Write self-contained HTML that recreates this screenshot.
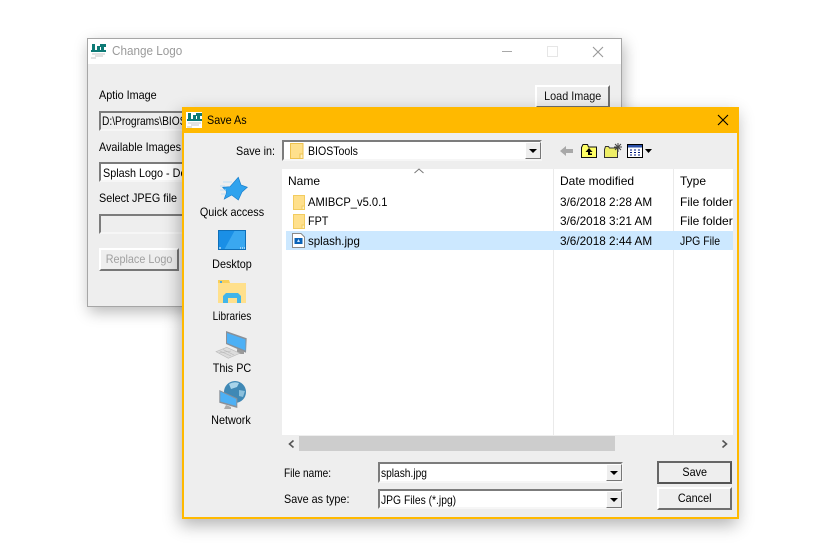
<!DOCTYPE html>
<html><head><meta charset="utf-8">
<style>
html,body{margin:0;padding:0;background:#fff;width:815px;height:553px;overflow:hidden}
body{position:relative;font-family:"Liberation Sans",sans-serif;font-size:12px;color:#000}
.a{position:absolute}
.t{position:absolute;white-space:nowrap;line-height:14px;transform-origin:0 0}
.x9{transform:scaleX(.9)}
.x85{transform:scaleX(.85)}
.sunk{position:absolute;box-sizing:border-box;border:2px solid;border-color:#7c7c7c #f6f6f6 #f6f6f6 #7c7c7c;background:#fff}
.btn{position:absolute;box-sizing:border-box;background:#eee;border:2px solid;border-color:#fff #6f6f6f #6f6f6f #fff;text-align:center;line-height:18px}
.btn span{display:inline-block;transform:scaleX(.9)}
.dd{position:absolute;box-sizing:border-box;width:16px;height:17px;background:#eee;border:1px solid;border-color:#fff #777 #777 #fff}
.dd:after{content:"";position:absolute;left:3px;top:6px;border:4px solid transparent;border-top:4px solid #000;border-bottom:0}
.c{text-align:center;width:80px;left:192px;transform-origin:50% 0}
svg{position:absolute;overflow:visible}
</style></head><body>

<!-- Back window -->
<div class="a" style="left:87px;top:38px;width:535px;height:269px;box-sizing:border-box;border:1px solid #a6a6a6;background:#eee;box-shadow:2px 5px 14px rgba(0,0,0,.28)"></div>
<div class="a" style="left:88px;top:39px;width:533px;height:25px;background:#fff"></div>
<svg style="left:91px;top:43px" width="16" height="16"><path d="M0 7h15v2H0zM1 1h3v6H1zM6 3h3v4H6zM9 1h6v3h-2v3h-3V4H9z" fill="#0e7a76"/><path d="M1 11h13M4 13h8M0 15h5" stroke="#c4c4c4"/></svg>
<div class="t x9" style="left:112px;top:44px;color:#9a9a9a;font-size:13px">Change Logo</div>
<div class="a" style="left:502px;top:51px;width:10px;height:1px;background:#a8a8a8"></div>
<div class="a" style="left:547px;top:46px;width:9px;height:9px;border:1px solid #e6e6e6"></div>
<svg style="left:592px;top:46px" width="12" height="12"><path d="M1 1L11 11M11 1L1 11" stroke="#999" stroke-width="1.1"/></svg>
<div class="t x9" style="left:99px;top:88px">Aptio Image</div>
<div class="btn" style="left:535px;top:85px;width:75px;height:23px;color:#111"><span>Load Image</span></div>
<div class="sunk" style="left:99px;top:111px;width:100px;height:20px;background:#eee"></div>
<div class="t x85" style="left:102px;top:114px">D:\Programs\BIOS</div>
<div class="t x9" style="left:99px;top:140px">Available Images</div>
<div class="sunk" style="left:99px;top:162px;width:100px;height:20px"></div>
<div class="t x9" style="left:103px;top:166px">Splash Logo - De</div>
<div class="t x9" style="left:99px;top:191px">Select JPEG file</div>
<div class="sunk" style="left:99px;top:214px;width:100px;height:20px;background:#eee"></div>
<div class="btn" style="left:99px;top:248px;width:80px;height:23px;color:#a0a0a0;border-color:#fff #777 #777 #fff;line-height:18px"><span>Replace Logo</span></div>

<!-- Front window -->
<div class="a" style="left:182px;top:107px;width:557px;height:412px;box-sizing:border-box;border:2px solid #ffb900;background:#eee;box-shadow:-2px 6px 16px rgba(0,0,0,.3)"></div>
<div class="a" style="left:182px;top:107px;width:557px;height:26px;background:#ffb900"></div>
<div class="a" style="left:186px;top:112px;width:16px;height:16px;background:#fff"></div>
<svg style="left:187px;top:112px" width="16" height="16"><path d="M0 7h15v2H0zM1 1h3v6H1zM6 3h3v4H6zM9 1h6v3h-2v3h-3V4H9z" fill="#0e7a76"/><path d="M1 11h13M4 13h8M0 15h5" stroke="#c4c4c4"/></svg>
<div class="t x9" style="left:207px;top:113px">Save As</div>
<svg style="left:717px;top:114px" width="12" height="12"><path d="M1 1L11 11M11 1L1 11" stroke="#000" stroke-width="1.1"/></svg>

<div class="t x9" style="left:236px;top:144px">Save in:</div>
<div class="sunk" style="left:282px;top:140px;width:260px;height:21px"></div>
<svg style="left:290px;top:143px" width="14" height="16"><path d="M.5.5h12.5v15H.5z" fill="#ffe08c" stroke="#eec24f"/><path d="M10 11h3v4.500h-3z" fill="#fff0c0" stroke="#eec24f"/></svg>
<div class="t" style="left:308px;top:144px;transform:scaleX(.88)">BIOSTools</div>
<div class="dd" style="left:525px;top:142px"></div>

<svg style="left:559px;top:144px" width="14" height="14"><path d="M1 7L7 2V5H14V9H7V12Z" fill="#a8a8a8"/></svg>
<svg style="left:581px;top:144px" width="16" height="14"><path d="M.5 3.500V13.500H15.500V3H7.500L6.500 .5H2Z" fill="#ffff66" stroke="#111"/><path d="M8 4L4.500 8H7V11H11V9.500H9V8H11.500Z" fill="#000"/></svg>
<svg style="left:604px;top:143px" width="18" height="15"><path d="M.5 6.500V14.500H13.500V5H5.500L4.500 3.500H1.500Z" fill="#eeee66" stroke="#333"/><path d="M14 0V9M10 4H18M11 1L17 7M17 1L11 7" stroke="#444"/></svg>
<svg style="left:627px;top:144px" width="26" height="14"><rect x=".5" y=".5" width="15" height="13" fill="#fff" stroke="#000"/><rect x="1" y="1" width="14" height="2.500" fill="#2a4fa8"/><path d="M3 6h2M7 6h2M11 6h2M3 8.500h2M7 8.500h2M11 8.500h2M3 11h2M7 11h2M11 11h2" stroke="#001a80"/><path d="M18 5h7l-3.500 4z" fill="#000"/></svg>

<!-- Places -->
<svg style="left:220px;top:176px" width="28" height="26"><path d="M18.300 1.300L21 9L27.300 11.300L22 16L18.300 24L11.700 19L4.300 23L6.700 15.700L2.700 11.300L10 10.700Z" fill="#2fa3ee" stroke="#1a7fcc" stroke-width=".7"/><path d="M3 6h9M0 10h5M0 14h6M1 18h5" stroke="#bcdff7"/></svg>
<div class="t c x9" style="top:205px">Quick access</div>
<svg style="left:218px;top:230px" width="28" height="20"><rect width="28" height="20" fill="#1a8fe6"/><path d="M17 0H28V20H6Z" fill="#3aa8f0"/><path d="M.5.500H27.500V19.500H.5Z" fill="none" stroke="#0f6fb8"/><path d="M1 18h2M22 18h1M24 18h1M26 18h1" stroke="#fff"/></svg>
<div class="t c x9" style="top:257px">Desktop</div>
<svg style="left:218px;top:280px" width="28" height="24"><path d="M0 3h28v20H0Z" fill="#ffe08c"/><path d="M0 0h11l1 3H0Z" fill="#f8cf5a"/><path d="M2 1h2v2H2z" fill="#4aa8e0"/><path d="M5 23V16L8 13H20L23 16V23H19V18H10V23Z" fill="#41b5ea"/></svg>
<div class="t c" style="top:309px;transform:scaleX(.84)">Libraries</div>
<svg style="left:216px;top:331px" width="32" height="30"><path d="M10 0L30.700 7.300L30 21.700L10 13Z" fill="#8a9098"/><path d="M11 2L29.500 8.500V19.500L11 12Z" fill="#4db0f5"/><path d="M21 18V23H28V20Z" fill="#9a9a9a"/><path d="M0 20.700L10.700 16.300L24 22.300L12.300 27.300Z" fill="#dcdcdc" stroke="#bbb" stroke-width=".6"/><path d="M4 20L15 25M7 18.500L18 24M3 22L15 20" stroke="#b8b8b8" stroke-width=".6"/></svg>
<div class="t c x9" style="top:361px">This PC</div>
<svg style="left:218px;top:382px" width="29" height="28"><circle cx="17" cy="10" r="11" fill="#3f88b5"/><path d="M11 2Q16 -1 21 1L19 5L13 7Z" fill="#a8d4ea"/><path d="M21 8l6 1-2 6-4-1Z" fill="#8cc0dc"/><path d="M1.300 8L19.300 16.300V26L1.300 20.700Z" fill="#8a9098"/><path d="M2.300 9.500L18.300 17V24L2.300 19.500Z" fill="#4db0f5"/><path d="M8 23L13 25V27H6Z" fill="#aaa"/></svg>
<div class="t c x9" style="top:413px;left:191px">Network</div>

<!-- List -->
<div class="a" style="left:282px;top:169px;width:451px;height:266px;background:#fff"></div>
<div class="a" style="left:553px;top:169px;width:1px;height:266px;background:#eaeaea"></div>
<div class="a" style="left:673px;top:169px;width:1px;height:266px;background:#eaeaea"></div>
<svg style="left:414px;top:168px" width="10" height="6"><path d="M.5 5L5 1L9.500 5" fill="none" stroke="#777"/></svg>
<div class="t" style="left:288px;top:174px">Name</div>
<div class="t" style="left:560px;top:174px">Date modified</div>
<div class="t" style="left:680px;top:174px">Type</div>

<svg style="left:293px;top:195px" width="12" height="15"><path d="M.5.500H11.500V14.500H.5Z" fill="#ffe08c" stroke="#f2cc60"/><path d="M9 11h2.500v3.500H9z" fill="#fff0c0" stroke="#f2cc60"/></svg>
<div class="t" style="left:308px;top:195px;transform:scaleX(.93)">AMIBCP_v5.0.1</div>
<div class="t" style="left:560px;top:195px;transform:scaleX(.98)">3/6/2018 2:28 AM</div>
<div class="t" style="left:680px;top:195px">File folder</div>
<svg style="left:293px;top:214px" width="12" height="15"><path d="M.5.500H11.500V14.500H.5Z" fill="#ffe08c" stroke="#f2cc60"/><path d="M9 11h2.500v3.500H9z" fill="#fff0c0" stroke="#f2cc60"/></svg>
<div class="t x9" style="left:308px;top:214px">FPT</div>
<div class="t" style="left:560px;top:214px;transform:scaleX(.98)">3/6/2018 3:21 AM</div>
<div class="t" style="left:680px;top:214px">File folder</div>
<div class="a" style="left:286px;top:231px;width:447px;height:19px;background:#cce8ff"></div>
<svg style="left:292px;top:233px" width="13" height="15"><path d="M.5.500H9L12.500 4V14.500H.5Z" fill="#fff" stroke="#8a8a8a"/><rect x="2.500" y="5" width="8" height="6" fill="#0a63b8"/><path d="M5 9l1.500-3L8 9Z" fill="#cfe8ff"/></svg>
<div class="t" style="left:308px;top:234px;transform:scaleX(.96)">splash.jpg</div>
<div class="t" style="left:560px;top:234px;transform:scaleX(.98)">3/6/2018 2:44 AM</div>
<div class="t" style="left:680px;top:234px;transform:scaleX(.87)">JPG File</div>

<!-- Scrollbar -->
<div class="a" style="left:299px;top:436px;width:316px;height:15px;background:#cdcdcd"></div>
<svg style="left:288px;top:440px" width="7" height="8"><path d="M5.500 .5L1.500 4L5.500 7.500" fill="none" stroke="#555" stroke-width="1.600"/></svg>
<svg style="left:721px;top:440px" width="7" height="8"><path d="M1.500 .5L5.500 4L1.500 7.500" fill="none" stroke="#555" stroke-width="1.600"/></svg>

<!-- Bottom -->
<div class="t" style="left:284px;top:466px;transform:scaleX(.84)">File name:</div>
<div class="sunk" style="left:378px;top:462px;width:245px;height:21px"></div>
<div class="t x85" style="left:381px;top:466px">splash.jpg</div>
<div class="dd" style="left:606px;top:464px"></div>
<div class="t x9" style="left:284px;top:492px">Save as type:</div>
<div class="sunk" style="left:378px;top:489px;width:245px;height:20px"></div>
<div class="t" style="left:381px;top:493px;transform:scaleX(.86)">JPG Files (*.jpg)</div>
<div class="dd" style="left:606px;top:491px"></div>
<div class="btn" style="left:657px;top:461px;width:75px;height:23px;border-color:#666 #555 #555 #666;line-height:19px"><span>Save</span></div>
<div class="btn" style="left:657px;top:487px;width:75px;height:23px;line-height:19px"><span>Cancel</span></div>
</body></html>
